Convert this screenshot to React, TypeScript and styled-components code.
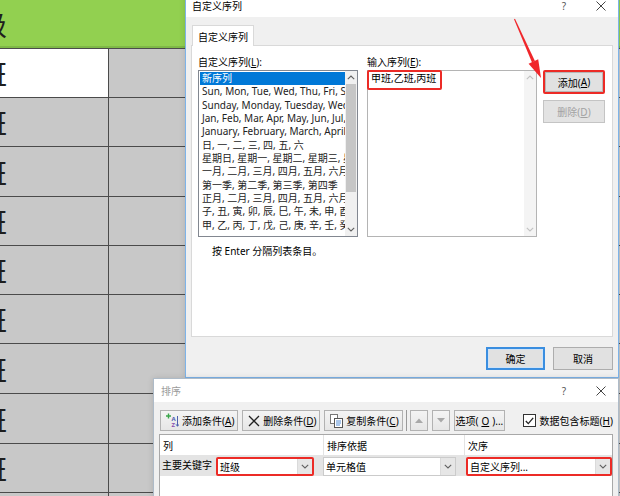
import React from "react";
import styled, { createGlobalStyle, css } from "styled-components";

const UI_FONT = `"Noto Sans", "Noto Sans CJK SC", sans-serif`;

const GlobalStyle = createGlobalStyle`
  html, body { margin: 0; padding: 0; }
  body {
    width: 620px; height: 496px; overflow: hidden; background: #fff;
    font-family: ${UI_FONT};
  }
  *, *::before, *::after { box-sizing: border-box; }
`;

const Desktop = styled.div`
  position: relative;
  width: 620px;
  height: 496px;
  overflow: hidden;
`;

/* ---------- background spreadsheet ---------- */

const Sheet = styled.div<{ $rows: string }>`
  display: grid;
  grid-template-columns: 108px 240px 1fr;
  grid-template-rows: ${(p) => p.$rows};
  gap: 1px;
  width: 620px;
  height: 496px;
  background: #4b4b4b;
`;

const HeaderCell = styled.div`
  grid-column: 1 / -1;
  background: #92d050;
  box-shadow: inset 0 -2px 0 #7fb947;
  overflow: hidden;
  display: flex;
  align-items: center;
`;

const Cell = styled.div<{ $white?: boolean }>`
  background: ${(p) => (p.$white ? "#ffffff" : "#c8c8c8")};
  overflow: hidden;
  display: flex;
  align-items: center;
`;

const CutGlyph = styled.span`
  font-family: "Noto Sans CJK SC", serif;
  font-size: 28px;
  line-height: 1;
  color: #1e1e1e;
  margin-left: -21px;
  white-space: nowrap;
`;

/* ---------- windows ---------- */

const Window = styled.div<{ $left: number; $top: number; $width: number; $active?: boolean }>`
  position: absolute;
  left: ${(p) => p.$left}px;
  top: ${(p) => p.$top}px;
  width: ${(p) => p.$width}px;
  border: 1px solid ${(p) => (p.$active ? "#7db3e8" : "#aebbc8")};
  background: #f0f0f0;
  box-shadow: 0 0 6px rgba(0, 0, 0, 0.12);
  font-size: 10px;
  color: #000;
`;

const TitleBar = styled.div<{ $h: number; $pl: number; $pt?: number }>`
  height: ${(p) => p.$h}px;
  background: #fff;
  display: flex;
  align-items: center;
  padding: ${(p) => p.$pt ?? 0}px 0 0 ${(p) => p.$pl}px;
`;

const TitleText = styled.span<{ $dim?: boolean }>`
  flex: 1;
  font-size: 10px;
  color: ${(p) => (p.$dim ? "#9b9b9b" : "#000")};
`;

const TitleButton = styled.span<{ $w: number }>`
  width: ${(p) => p.$w}px;
  height: 100%;
  display: flex;
  align-items: center;
  justify-content: center;
  color: #555;
  font-size: 10px;
`;

const Body = styled.div<{ $pad: string }>`
  padding: ${(p) => p.$pad};
`;

/* ---------- custom list dialog ---------- */

const TabStrip = styled.div`
  display: flex;
  height: 21px;
  padding-left: 1px;
  margin-bottom: -1px;
  position: relative;
  z-index: 1;
`;

const Tab = styled.div`
  width: 62px;
  height: 21px;
  background: #fff;
  border: 1px solid #d9d9d9;
  border-bottom: none;
  display: flex;
  align-items: center;
  justify-content: center;
  font-size: 10px;
`;

const Panel = styled.div`
  height: 292px;
  background: #fff;
  border: 1px solid #d9d9d9;
  padding: 8px 6px 0 6px;
  display: flex;
  flex-direction: column;
`;

const Columns = styled.div`
  display: flex;
  align-items: flex-start;
`;

const Column = styled.div<{ $w: number; $ml?: number }>`
  width: ${(p) => p.$w}px;
  margin-left: ${(p) => p.$ml ?? 0}px;
  display: flex;
  flex-direction: column;
`;

const FieldLabel = styled.div`
  height: 16px;
  line-height: 16px;
  font-size: 10px;
  white-space: nowrap;
`;

const ListBox = styled.div`
  height: 167px;
  border: 1px solid #828790;
  background: #fff;
  display: flex;
  overflow: hidden;
`;

const ListItems = styled.div`
  flex: 1;
  min-width: 0;
  padding: 1px 0 1px 1px;
  overflow: hidden;
`;

const ListItem = styled.div<{ $selected?: boolean }>`
  height: 13.35px;
  line-height: 13.35px;
  padding-left: 2px;
  white-space: nowrap;
  overflow: hidden;
  font-size: 10px;
  color: ${(p) => (p.$selected ? "#fff" : "#222")};
  background: ${(p) => (p.$selected ? "#0078d7" : "transparent")};
`;

const ScrollBar = styled.div<{ $light?: boolean }>`
  width: 12px;
  background: ${(p) => (p.$light ? "#f4f4f4" : "#f0f0f0")};
  display: flex;
  flex-direction: column;
  align-items: stretch;
`;

const ScrollArrow = styled.div`
  height: 13px;
  display: flex;
  align-items: center;
  justify-content: center;
`;

const ScrollTrack = styled.div`
  flex: 1;
  display: flex;
  flex-direction: column;
  padding: 0 1px;
`;

const ScrollThumb = styled.div<{ $h: number }>`
  height: ${(p) => p.$h}px;
  background: #c6c6c6;
`;

const EntryBox = styled.div`
  position: relative;
  height: 167px;
  border: 1px solid #b4b4b4;
  background: #fff;
  display: flex;
`;

const EntryText = styled.div`
  flex: 1;
  padding: 1px 3px;
  line-height: 13px;
  font-size: 10px;
  white-space: nowrap;
`;

const Annotation = styled.div<{ $w: number; $h: number }>`
  position: absolute;
  left: -1px;
  top: -1px;
  width: ${(p) => p.$w}px;
  height: ${(p) => p.$h}px;
  border: 2px solid #ec2b26;
  border-radius: 2px;
  pointer-events: none;
`;

const ButtonColumn = styled.div<{ $ml: number }>`
  width: 62px;
  margin-left: ${(p) => p.$ml}px;
  padding-top: 16px;
  display: flex;
  flex-direction: column;
  gap: 6px;
`;

const PushButton = styled.div<{ $variant?: "normal" | "default" | "highlight" | "disabled"; $w?: number; $h: number }>`
  width: ${(p) => (p.$w ? `${p.$w}px` : "100%")};
  height: ${(p) => p.$h}px;
  display: flex;
  align-items: center;
  justify-content: center;
  font-size: 10px;
  background: #e1e1e1;
  border: 1px solid #adadad;
  color: #000;
  ${(p) =>
    p.$variant === "default" &&
    css`
      border: 2px solid #3a8ee0;
      box-shadow: inset 0 0 0 1px #cfe3f7;
    `}
  ${(p) =>
    p.$variant === "highlight" &&
    css`
      border: 2px solid #ec2b26;
      border-radius: 2px;
      box-shadow: inset 0 0 0 1px #b7b7b7;
    `}
  ${(p) =>
    p.$variant === "disabled" &&
    css`
      background: #e3e3e3;
      border-color: #c4c4c4;
      color: #a2a2a2;
    `}
`;

const Hint = styled.div`
  margin-top: 6px;
  padding-left: 14px;
  line-height: 16px;
  font-size: 10px;
`;

const Footer = styled.div`
  margin-top: 10px;
  display: flex;
  justify-content: flex-end;
  gap: 8px;
`;

/* ---------- sort dialog ---------- */

const Toolbar = styled.div`
  display: flex;
  align-items: center;
  gap: 4px;
  margin-left: 1px;
  height: 21px;
`;

const ToolButton = styled.div<{ $w: number; $disabled?: boolean }>`
  width: ${(p) => p.$w}px;
  height: 21px;
  border: 1px solid #b2b2b2;
  background: linear-gradient(#f4f4f4, #e6e6e6);
  display: flex;
  align-items: center;
  justify-content: ${(p) => (p.$disabled ? "center" : "flex-start")};
  padding-left: ${(p) => (p.$disabled ? 0 : 5)}px;
  gap: 3px;
  font-size: 10px;
  white-space: nowrap;
`;

const ToolSeparator = styled.div`
  width: 1px;
  height: 21px;
  margin: 0 -1px;
  background: #9a9a9a;
`;

const CheckWrap = styled.div`
  margin-left: 14px;
  display: flex;
  align-items: center;
  gap: 4px;
  font-size: 10px;
  white-space: nowrap;
`;

const CheckBox = styled.div`
  width: 13px;
  height: 13px;
  border: 1px solid #333;
  background: #fff;
  display: flex;
  align-items: center;
  justify-content: center;
`;

const CondGrid = styled.div`
  margin-top: 3px;
  height: 80px;
  background: #fff;
  border: 1px solid #a8a8a8;
  display: grid;
  grid-template-columns: 163px 141px 1fr;
  grid-template-rows: 20px 21px;
  align-content: start;
`;

const HeadCell = styled.div<{ $sep?: boolean }>`
  display: flex;
  align-items: center;
  padding-left: 3px;
  font-size: 10px;
  border-left: ${(p) => (p.$sep ? "1px solid #e3e3e3" : "none")};
`;

const RowCell = styled.div<{ $pl: number }>`
  background: #e4e4e4;
  display: flex;
  align-items: flex-start;
  padding: 2px 0 0 ${(p) => p.$pl}px;
`;

const RowLabel = styled.span`
  width: 56px;
  height: 16px;
  line-height: 16px;
  padding-left: 2px;
  font-size: 10px;
  white-space: nowrap;
`;

const Combo = styled.div<{ $w?: number; $hl?: boolean }>`
  width: ${(p) => (p.$w ? `${p.$w}px` : "100%")};
  height: 19px;
  display: flex;
  align-items: stretch;
  background: #fff;
  border: ${(p) => (p.$hl ? "2px solid #ec2b26" : "1px solid #cbcbcb")};
  border-radius: ${(p) => (p.$hl ? 2 : 0)}px;
`;

const ComboText = styled.span`
  flex: 1;
  display: flex;
  align-items: center;
  padding-left: 2px;
  font-size: 10px;
  white-space: nowrap;
  overflow: hidden;
`;

const ComboArrow = styled.span`
  width: 15px;
  background: #e6e6e6;
  border-left: 1px solid #dadada;
  display: flex;
  align-items: center;
  justify-content: center;
`;

const ArrowOverlay = styled.svg`
  position: absolute;
  left: 0;
  top: 0;
  pointer-events: none;
`;

/* ---------- icons ---------- */

const Chevron = ({ up, color = "#606060" }: { up?: boolean; color?: string }) => (
  <svg width="8" height="5" viewBox="0 0 8 5">
    <polyline
      points={up ? "0.8,4.2 4,1 7.2,4.2" : "0.8,0.8 4,4 7.2,0.8"}
      fill="none"
      stroke={color}
      strokeWidth="1.1"
    />
  </svg>
);

const CloseIcon = () => (
  <svg width="10" height="10" viewBox="0 0 10 10">
    <path d="M0.5 0.5 L9.5 9.5 M9.5 0.5 L0.5 9.5" stroke="#444" strokeWidth="1" />
  </svg>
);

const SortAddIcon = () => (
  <svg width="13" height="15" viewBox="0 0 13 15">
    <path d="M2.5 0.5 V5.5 M0 3 H5" stroke="#3aa64a" strokeWidth="1.4" />
    <text x="5.5" y="7.5" fontSize="6" fontFamily="Noto Sans, sans-serif" fill="#4e5fb0" fontWeight="bold">A</text>
    <text x="5.5" y="14" fontSize="6" fontFamily="Noto Sans, sans-serif" fill="#8a4fb0" fontWeight="bold">Z</text>
    <path d="M11.5 3 V13 M10 11.3 L11.5 13.3 L13 11.3" stroke="#4e5fb0" strokeWidth="1" fill="none" />
  </svg>
);

const DeleteIcon = () => (
  <svg width="12" height="12" viewBox="0 0 12 12">
    <path d="M1 1 L11 11 M11 1 L1 11" stroke="#222" strokeWidth="1.3" />
  </svg>
);

const CopyIcon = () => (
  <svg width="13" height="14" viewBox="0 0 13 14">
    <rect x="0.5" y="0.5" width="7" height="9" fill="#fff" stroke="#777" />
    <rect x="4.5" y="4.5" width="8" height="9" fill="#fff" stroke="#555" />
    <path d="M6 7 H11 M6 9 H11 M6 11 H10" stroke="#3f7fd0" strokeWidth="0.9" />
  </svg>
);

const Triangle = ({ up }: { up?: boolean }) => (
  <svg width="8" height="5" viewBox="0 0 8 5">
    <polygon points={up ? "0,5 4,0.5 8,5" : "0,0 8,0 4,4.5"} fill="#a8a8a8" />
  </svg>
);

const CheckMark = () => (
  <svg width="9" height="8" viewBox="0 0 9 8">
    <polyline points="0.8,4 3.3,6.6 8.2,0.8" fill="none" stroke="#222" strokeWidth="1.3" />
  </svg>
);

/* ---------- data ---------- */

const rowHeights = [48, 48, 48, 49, 48, 48, 48, 49, 49, 48, 10];

const customLists = [
  "新序列",
  "Sun, Mon, Tue, Wed, Thu, Fri, Sat",
  "Sunday, Monday, Tuesday, Wednesday, Thursday, Friday, Saturday",
  "Jan, Feb, Mar, Apr, May, Jun, Jul, Aug, Sep, Oct, Nov, Dec",
  "January, February, March, April, May, June, July, August",
  "日, 一, 二, 三, 四, 五, 六",
  "星期日, 星期一, 星期二, 星期三, 星期四, 星期五, 星期六",
  "一月, 二月, 三月, 四月, 五月, 六月, 七月, 八月, 九月",
  "第一季, 第二季, 第三季, 第四季",
  "正月, 二月, 三月, 四月, 五月, 六月, 七月, 八月, 九月",
  "子, 丑, 寅, 卯, 辰, 巳, 午, 未, 申, 酉, 戌, 亥",
  "甲, 乙, 丙, 丁, 戊, 己, 庚, 辛, 壬, 癸",
];

export default function App() {
  const dataRows = rowHeights.length - 1;
  return (
    <>
      <GlobalStyle />
      <Desktop>
        <Sheet $rows={rowHeights.map((h) => `${h}px`).join(" ")}>
          <HeaderCell>
            <CutGlyph>级</CutGlyph>
          </HeaderCell>
          {Array.from({ length: dataRows }).map((_, i) => (
            <React.Fragment key={i}>
              <Cell $white={i === 0}>{i < dataRows - 1 && <CutGlyph>班</CutGlyph>}</Cell>
              <Cell />
              <Cell />
            </React.Fragment>
          ))}
        </Sheet>

        {/* 自定义序列 dialog */}
        <Window $left={185} $top={-10} $width={434} $active>
          <TitleBar $h={26} $pl={6} $pt={3}>
            <TitleText>自定义序列</TitleText>
            <TitleButton $w={40}>?</TitleButton>
            <TitleButton $w={34}>
              <CloseIcon />
            </TitleButton>
          </TitleBar>
          <Body $pad="8px 5px 7px 5px">
            <TabStrip>
              <Tab>自定义序列</Tab>
            </TabStrip>
            <Panel>
              <Columns>
                <Column $w={160}>
                  <FieldLabel>
                    自定义序列(<u>L</u>):
                  </FieldLabel>
                  <ListBox>
                    <ListItems>
                      {customLists.map((t, i) => (
                        <ListItem key={i} $selected={i === 0}>
                          {t}
                        </ListItem>
                      ))}
                    </ListItems>
                    <ScrollBar>
                      <ScrollArrow>
                        <Chevron up />
                      </ScrollArrow>
                      <ScrollTrack>
                        <ScrollThumb $h={108} />
                      </ScrollTrack>
                      <ScrollArrow>
                        <Chevron />
                      </ScrollArrow>
                    </ScrollBar>
                  </ListBox>
                </Column>
                <Column $w={170} $ml={9}>
                  <FieldLabel>
                    输入序列(<u>E</u>):
                  </FieldLabel>
                  <EntryBox>
                    <EntryText>甲班,乙班,丙班</EntryText>
                    <ScrollBar $light>
                      <ScrollArrow>
                        <Chevron up color="#c2c2c2" />
                      </ScrollArrow>
                      <ScrollTrack />
                      <ScrollArrow>
                        <Chevron color="#c2c2c2" />
                      </ScrollArrow>
                    </ScrollBar>
                    <Annotation $w={75} $h={20} />
                  </EntryBox>
                </Column>
                <ButtonColumn $ml={6}>
                  <PushButton $variant="highlight" $h={24}>
                    添加(<u>A</u>)
                  </PushButton>
                  <PushButton $variant="disabled" $h={23}>
                    删除(<u>D</u>)
                  </PushButton>
                </ButtonColumn>
              </Columns>
              <Hint>按 Enter 分隔列表条目。</Hint>
            </Panel>
            <Footer>
              <PushButton $variant="default" $w={59} $h={23}>
                确定
              </PushButton>
              <PushButton $w={60} $h={23}>
                取消
              </PushButton>
            </Footer>
          </Body>
        </Window>

        {/* 排序 dialog */}
        <Window $left={153} $top={378} $width={466}>
          <TitleBar $h={23} $pl={7}>
            <TitleText $dim>排序</TitleText>
            <TitleButton $w={40}>?</TitleButton>
            <TitleButton $w={34}>
              <CloseIcon />
            </TitleButton>
          </TitleBar>
          <Body $pad="8px 5px 0 5px">
            <Toolbar>
              <ToolButton $w={79}>
                <SortAddIcon />
                <span>
                  添加条件(<u>A</u>)
                </span>
              </ToolButton>
              <ToolButton $w={79}>
                <DeleteIcon />
                <span>
                  删除条件(<u>D</u>)
                </span>
              </ToolButton>
              <ToolButton $w={79}>
                <CopyIcon />
                <span>
                  复制条件(<u>C</u>)
                </span>
              </ToolButton>
              <ToolSeparator />
              <ToolButton $w={19} $disabled>
                <Triangle up />
              </ToolButton>
              <ToolButton $w={18} $disabled>
                <Triangle />
              </ToolButton>
              <ToolButton $w={51} $disabled>
                选项(<u>O</u>)...
              </ToolButton>
              <CheckWrap>
                <CheckBox>
                  <CheckMark />
                </CheckBox>
                <span>
                  数据包含标题(<u>H</u>)
                </span>
              </CheckWrap>
            </Toolbar>
            <CondGrid>
              <HeadCell>列</HeadCell>
              <HeadCell $sep>排序依据</HeadCell>
              <HeadCell $sep>次序</HeadCell>
              <RowCell $pl={0}>
                <RowLabel>主要关键字</RowLabel>
                <Combo $w={98} $hl>
                  <ComboText>班级</ComboText>
                  <ComboArrow>
                    <Chevron />
                  </ComboArrow>
                </Combo>
              </RowCell>
              <RowCell $pl={0}>
                <Combo $w={133}>
                  <ComboText>单元格值</ComboText>
                  <ComboArrow>
                    <Chevron />
                  </ComboArrow>
                </Combo>
              </RowCell>
              <RowCell $pl={2}>
                <Combo $hl>
                  <ComboText>自定义序列...</ComboText>
                  <ComboArrow>
                    <Chevron />
                  </ComboArrow>
                </Combo>
              </RowCell>
            </CondGrid>
          </Body>
        </Window>

        <ArrowOverlay width="620" height="496" viewBox="0 0 620 496">
          <polygon points="515.0,18.7 534.9,61.0 532.0,62.4 514.0,19.3" fill="#f0262a" />
          <polygon points="541,78 538.2,59.3 528.6,63.8" fill="#f0262a" />
        </ArrowOverlay>
      </Desktop>
    </>
  );
}
